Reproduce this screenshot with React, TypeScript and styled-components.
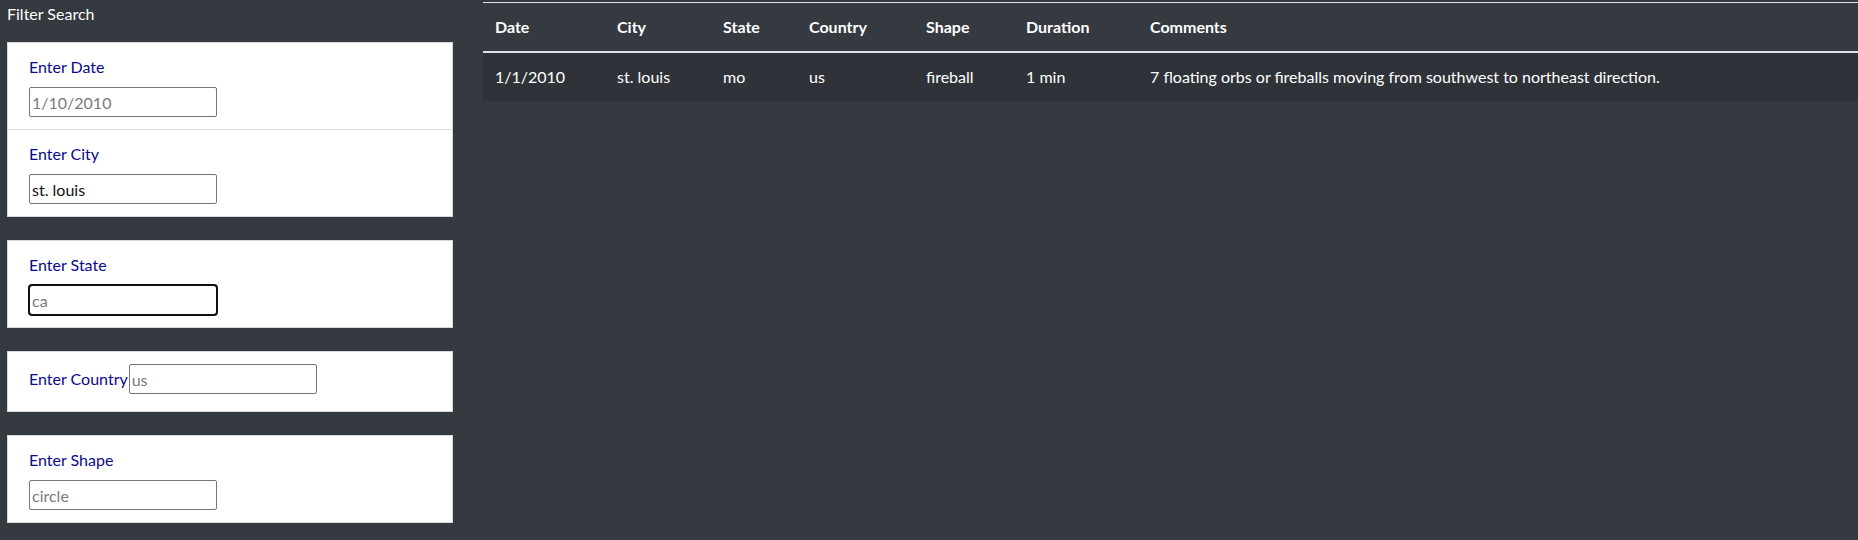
import React from 'react'
import styled, { createGlobalStyle } from 'styled-components'

const GlobalStyle = createGlobalStyle`
  html, body {
    margin: 0;
    padding: 0;
    background: #353940;
  }

  body {
    font-family: Lato, "Open Sans", "Liberation Sans", sans-serif;
    font-size: 16px;
    line-height: 24px;
    color: #ffffff;
  }

  * {
    box-sizing: border-box;
  }
`

export const StyledPage = styled.div`
  display: grid;
  grid-template-columns: 446px 1fr;
  column-gap: 30px;
  padding-left: 7px;
  min-height: 540px;
`

export const StyledSidebar = styled.aside`
  display: flex;
  flex-direction: column;
`

export const StyledHeading = styled.div`
  padding-top: 2px;
  margin-bottom: 16px;
  color: #ffffff;
`

export const StyledCards = styled.div`
  display: flex;
  flex-direction: column;
  gap: 23px;
`

export const StyledCard = styled.ul`
  margin: 0;
  padding: 0;
  list-style: none;
  background: #ffffff;
  border: 1px solid #d6d8db;
`

export const StyledItem = styled.li<{ $inline?: boolean }>`
  display: flex;
  flex-direction: ${(p) => (p.$inline ? 'row' : 'column')};
  align-items: ${(p) => (p.$inline ? 'center' : 'flex-start')};
  gap: ${(p) => (p.$inline ? '1px' : '8px')};
  padding: ${(p) => (p.$inline ? '12px 21px 17px' : '12px 21px')};

  & + & {
    border-top: 1px solid #dcdcdc;
  }
`

export const StyledLabel = styled.label`
  color: #0a0a8c;
  line-height: 24px;
`

export const StyledInput = styled.input<{ $focused?: boolean }>`
  width: 188px;
  height: 30px;
  padding: 1px 2px;
  border: 1px solid #767676;
  font-family: inherit;
  font-size: 16px;
  color: #111111;
  background: #ffffff;
  outline: ${(p) => (p.$focused ? '2px solid #101010' : 'none')};
  outline-offset: -1px;
  border-radius: ${(p) => (p.$focused ? '3px' : '2px')};

  &::placeholder {
    color: #7a7a7a;
  }
`

export const StyledTable = styled.table`
  width: 100%;
  margin-top: 2px;
  border-collapse: collapse;
  table-layout: fixed;
  color: #ffffff;
`

export const StyledHeadCell = styled.th<{ $width?: number }>`
  width: ${(p) => (p.$width ? `${p.$width}px` : 'auto')};
  padding: 12px;
  text-align: left;
  font-weight: 700;
  border-top: 1px solid #dee2e6;
  border-bottom: 2px solid #dee2e6;
`

export const StyledRow = styled.tr`
  &:nth-child(odd) {
    background: #2f3339;
  }
`

export const StyledCell = styled.td`
  padding: 12px;
  vertical-align: top;
`

type Field = { label: string; placeholder?: string; value?: string; focused?: boolean }

const cards: { fields: Field[]; inline?: boolean }[] = [
  {
    fields: [
      { label: 'Enter Date', placeholder: '1/10/2010' },
      { label: 'Enter City', value: 'st. louis' },
    ],
  },
  { fields: [{ label: 'Enter State', placeholder: 'ca', focused: true }] },
  { fields: [{ label: 'Enter Country', placeholder: 'us' }], inline: true },
  { fields: [{ label: 'Enter Shape', placeholder: 'circle' }] },
]

const columns: { title: string; width?: number }[] = [
  { title: 'Date', width: 122 },
  { title: 'City', width: 106 },
  { title: 'State', width: 86 },
  { title: 'Country', width: 117 },
  { title: 'Shape', width: 100 },
  { title: 'Duration', width: 124 },
  { title: 'Comments' },
]

const sightings = [
  [
    '1/1/2010',
    'st. louis',
    'mo',
    'us',
    'fireball',
    '1 min',
    '7 floating orbs or fireballs moving from southwest to northeast direction.',
  ],
]

export default function App() {
  return (
    <>
      <GlobalStyle />
      <StyledPage>
        <StyledSidebar>
          <StyledHeading>Filter Search</StyledHeading>
          <StyledCards>
            {cards.map((card, i) => (
              <StyledCard key={i}>
                {card.fields.map((f) => {
                  const id = f.label.toLowerCase().replace(' ', '-')
                  return (
                    <StyledItem key={f.label} $inline={card.inline}>
                      <StyledLabel htmlFor={id}>{f.label}</StyledLabel>
                      <StyledInput
                        id={id}
                        type="text"
                        placeholder={f.placeholder}
                        defaultValue={f.value}
                        $focused={f.focused}
                      />
                    </StyledItem>
                  )
                })}
              </StyledCard>
            ))}
          </StyledCards>
        </StyledSidebar>

        <main>
          <StyledTable>
            <thead>
              <tr>
                {columns.map((c) => (
                  <StyledHeadCell key={c.title} $width={c.width}>
                    {c.title}
                  </StyledHeadCell>
                ))}
              </tr>
            </thead>
            <tbody>
              {sightings.map((row, i) => (
                <StyledRow key={i}>
                  {row.map((cell, j) => (
                    <StyledCell key={j}>{cell}</StyledCell>
                  ))}
                </StyledRow>
              ))}
            </tbody>
          </StyledTable>
        </main>
      </StyledPage>
    </>
  )
}
